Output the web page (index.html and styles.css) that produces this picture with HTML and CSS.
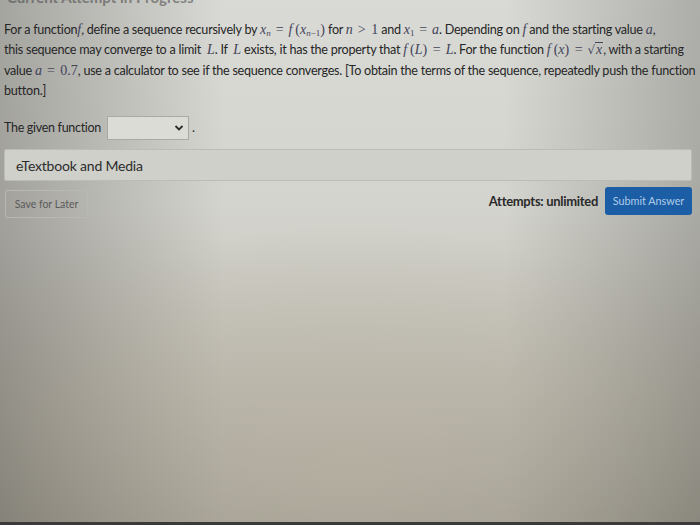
FILE: index.html
```html
<!DOCTYPE html>
<html>
<head>
<meta charset="utf-8">
<link rel="stylesheet" href="styles.css">
</head>
<body>
<div class="page">
  <div class="head">Current Attempt in Progress</div>
  <p class="question">For a function<i class="m">f</i>, define a sequence recursively by <i class="m">x<sub>n</sub></i> <span class="m op">=</span> <i class="m">f</i> <span class="m">(<i>x</i><sub><i>n</i>−1</sub>)</span> for <i class="m">n</i> <span class="m"><span class="op">&gt;</span> 1</span> and <i class="m">x</i><sub>1</sub> <span class="m op">=</span> <i class="m">a</i>. Depending on <i class="m">f</i> and the starting value <i class="m">a</i>,<br>this sequence may converge to a limit &nbsp;<i class="m">L</i>. If &nbsp;<i class="m">L</i> exists, it has the property that <i class="m">f</i> <span class="m">(<i>L</i>) <span class="op">=</span></span> <i class="m">L</i>. For the function <i class="m">f</i> <span class="m">(<i>x</i>) <span class="op">=</span></span> <span class="sqrt">√<span class="rad"><i class="m">x</i></span></span>, with a starting<br>value <i class="m">a</i> <span class="m"><span class="op">=</span> 0.7</span>, use a calculator to see if the sequence converges. [To obtain the terms of the sequence, repeatedly push the function<br>button.]</p>
  <div class="given">
    <span>The given function</span>
    <span class="select"><svg width="10" height="8" viewBox="0 0 10 8"><path d="M1.5 2 L5 5.5 L8.5 2" fill="none" stroke="#2b2b2b" stroke-width="1.8"/></svg></span>
    <span class="dot">.</span>
  </div>
  <div class="etext">eTextbook and Media</div>
  <div class="actions">
    <div class="save">Save for Later</div>
    <div class="right">
      <span class="attempts">Attempts: unlimited</span>
      <div class="submit">Submit Answer</div>
    </div>
  </div>
</div>
</body>
</html>
```
FILE: styles.css
```css
html, body {
  margin: 0;
  height: 100%;
}
body {
  width: 700px;
  height: 525px;
  overflow: hidden;
  font-family: Lato, "Open Sans", sans-serif;
  color: #262626;
  background:
    radial-gradient(ellipse 55% 45% at 50% 88%, rgba(186,180,164,0.5), rgba(186,180,164,0) 100%),
    linear-gradient(to right, rgba(80,78,74,0.38) 0%, rgba(80,78,74,0) 32%, rgba(80,78,74,0) 72%, rgba(80,80,76,0.32) 100%),
    linear-gradient(to bottom, #d9dad5 0%, #d4d4ce 40%, #bab6ab 75%, #a39f93 100%);
  position: relative;
}
body::after {
  content: "";
  position: absolute;
  left: 0; right: 0; bottom: 0;
  height: 3px;
  background: #3a3a3a;
}
.page {
  padding: 0 8px 0 4px;
}
.head {
  font-weight: 700;
  font-size: 15px;
  color: #444;
  margin-top: -11px;
  height: 17px;
  line-height: 17px;
  padding-left: 3px;
  opacity: 0.55;
}
.question {
  margin: 0;
  padding-top: 14px;
  font-size: 12.6px;
  line-height: 20.3px;
  letter-spacing: -0.26px;
  white-space: nowrap;
}
.m {
  font-family: "Liberation Serif", "Times New Roman", serif;
  font-size: 14px;
  line-height: 1;
  color: #43435a;
  letter-spacing: 0;
}
.op {
  display: inline-block;
  margin: 0 2px;
}
i.m, .m i { font-style: italic; }
sub {
  font-family: "Liberation Serif", "Times New Roman", serif;
  font-size: 9px;
  line-height: 0;
  vertical-align: -2px;
  color: #43435a;
}
.sqrt {
  font-family: "DejaVu Sans", sans-serif;
  font-size: 12px;
  line-height: 1;
  color: #43435a;
}
.rad {
  border-top: 1px solid #43435a;
  padding: 0 1px;
}
.given {
  display: flex;
  align-items: center;
  margin-top: 14px;
  font-size: 12.5px;
  letter-spacing: -0.3px;
  height: 25px;
}
.select {
  width: 82px;
  height: 24px;
  margin-left: 6px;
  border: 1px solid #a9aaa6;
  background: #dcdcd6;
  display: flex;
  align-items: center;
  justify-content: flex-end;
  padding-right: 4px;
  box-sizing: border-box;
}
.dot { margin-left: 3px; }
.etext {
  margin-top: 9px;
  height: 32px;
  border: 1px solid #bcbcb6;
  border-radius: 2px;
  background: #cfd0ca;
  font-size: 14px;
  line-height: 31px;
  padding-left: 11px;
  box-sizing: border-box;
  color: #2c2c2c;
  letter-spacing: -0.2px;
}
.actions {
  display: flex;
  justify-content: space-between;
  align-items: flex-start;
  margin-top: 6px;
}
.save {
  margin-top: 3px;
  width: 83px;
  height: 28px;
  border: 1px solid #b9b9b3;
  border-radius: 2px;
  box-sizing: border-box;
  font-size: 10.5px;
  line-height: 26px;
  text-align: center;
  color: #5a5a5a;
  margin-left: 1px;
}
.right {
  display: flex;
  align-items: center;
  gap: 7px;
}
.attempts {
  font-weight: 700;
  font-size: 13px;
  color: #2a2a2a;
  letter-spacing: -0.3px;
}
.submit {
  width: 87px;
  height: 28px;
  background: #1b5ea6;
  border-radius: 3px;
  color: #b0cbe8;
  font-size: 10.8px;
  line-height: 28px;
  text-align: center;
}
```
